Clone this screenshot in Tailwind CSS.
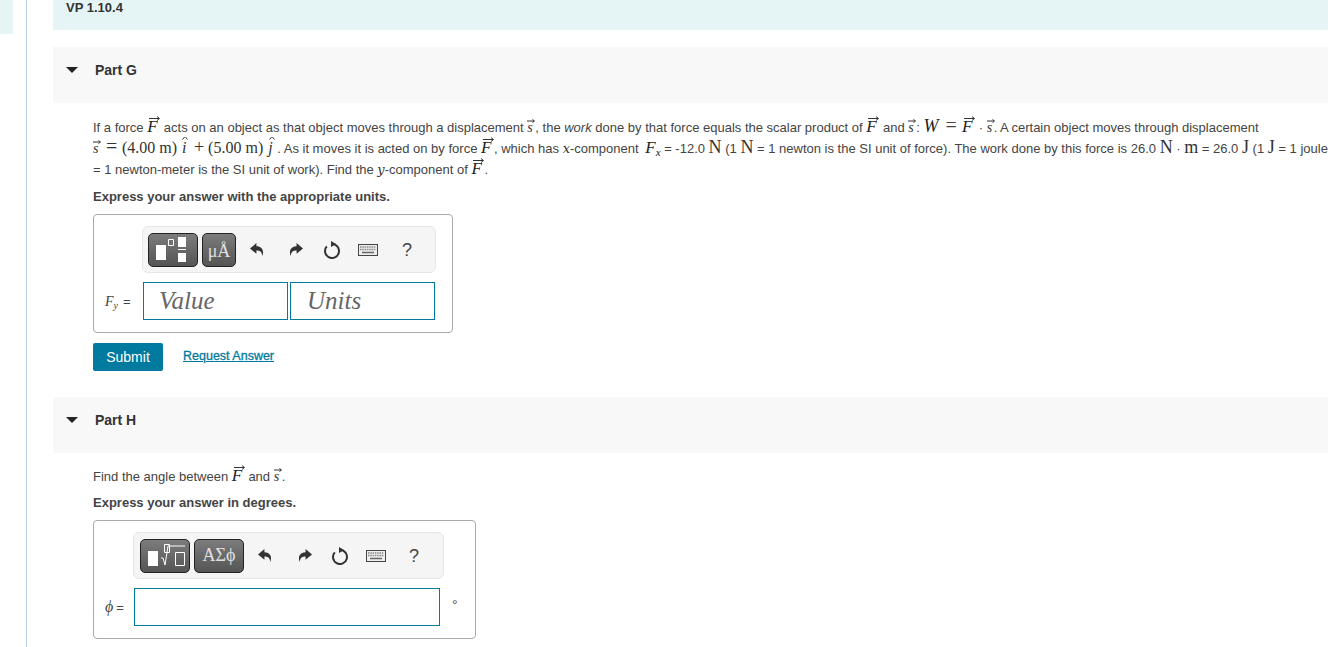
<!DOCTYPE html>
<html>
<head>
<meta charset="utf-8">
<script src="https://cdn.jsdelivr.net/npm/@tailwindcss/browser@4"></script>
</head>
<body class="bg-white">
<div class="flex w-[1342px] h-[647px] overflow-hidden font-['Liberation_Sans',sans-serif] text-[#333]">
  <div class="w-[13px] h-[34px] bg-[#e5f5f5] shrink-0"></div>
  <div class="ml-[13px] w-[1px] h-[647px] bg-[#b9d0e6] shrink-0"></div>
  <main class="ml-[26px] w-[1275px] shrink-0">
    <div class="h-[30px] bg-[#e5f5f5] pl-[13px] text-[13px] font-bold leading-[16px]">VP 1.10.4</div>

    <div class="mt-[17px] h-[56px] bg-[#f8f8f8] flex items-center">
      <svg class="ml-[13px] mb-[10px]" width="12" height="6" viewBox="0 0 12 6"><path d="M0 0h12L6 6z" fill="#222"/></svg>
      <span class="ml-[17px] mb-[10px] text-[14px] font-bold">Part G</span>
    </div>

    <div class="pl-[40px] mt-[13px] text-[13px] text-[#444]">
      <div class="h-[21px] leading-[21px] whitespace-nowrap">If a force <span class="relative inline-block w-[13px] font-['Liberation_Serif',serif] italic text-[17px] text-[#222]">F<svg class="absolute left-[2px] top-[0px]" width="11" height="5" viewBox="0 0 11 5"><path d="M0 2.500h10M8 .5l2.500 2L8 4.500" stroke="#333" fill="none"/></svg></span> acts on an object as that object moves through a displacement <span class="relative inline-block w-[8px] font-['Liberation_Serif',serif] italic text-[14px] text-[#333]">s<svg class="absolute left-0 top-[2px]" width="8" height="4" viewBox="0 0 8 4"><path d="M0 2h7M5.500 .5L7.500 2 5.500 3.500" stroke="#333" fill="none"/></svg></span>, the <i>work</i> done by that force equals the scalar product of <span class="relative inline-block w-[13px] font-['Liberation_Serif',serif] italic text-[17px] text-[#222]">F<svg class="absolute left-[2px] top-[0px]" width="11" height="5" viewBox="0 0 11 5"><path d="M0 2.500h10M8 .5l2.500 2L8 4.500" stroke="#333" fill="none"/></svg></span> and <span class="relative inline-block w-[8px] font-['Liberation_Serif',serif] italic text-[14px] text-[#333]">s<svg class="absolute left-0 top-[2px]" width="8" height="4" viewBox="0 0 8 4"><path d="M0 2h7M5.500 .5L7.500 2 5.500 3.500" stroke="#333" fill="none"/></svg></span>: <span class="inline-block w-[19px] font-['Liberation_Serif',serif] italic text-[18px] text-[#222]">W</span><span class="inline-block w-[13px] ml-[3px] font-['Liberation_Serif',serif] text-[20px] leading-[16px]">=</span> <span class="relative inline-block w-[13px] font-['Liberation_Serif',serif] italic text-[17px] text-[#222]">F<svg class="absolute left-[2px] top-[0px]" width="11" height="5" viewBox="0 0 11 5"><path d="M0 2.500h10M8 .5l2.500 2L8 4.500" stroke="#333" fill="none"/></svg></span> · <span class="relative inline-block w-[7px] font-['Liberation_Serif',serif] italic text-[14px] text-[#333]">s<svg class="absolute left-0 top-[2px]" width="8" height="4" viewBox="0 0 8 4"><path d="M0 2h7M5.500 .5L7.500 2 5.500 3.500" stroke="#333" fill="none"/></svg></span>. <span class="-ml-[1px]">A certain object moves through displacement</span></div>
      <div class="h-[21px] leading-[21px] whitespace-nowrap overflow-hidden"><span class="relative inline-block w-[8px] font-['Liberation_Serif',serif] italic text-[14px] text-[#333]">s<svg class="absolute left-0 top-[2px]" width="8" height="4" viewBox="0 0 8 4"><path d="M0 2h7M5.500 .5L7.500 2 5.500 3.500" stroke="#333" fill="none"/></svg></span><span class="font-['Liberation_Serif',serif] text-[16px] text-[#333]"><span class="inline-block ml-[5px] w-[14px] text-[20px] leading-[16px]">=</span><span class="ml-[2px]">(4.00 m)</span><span class="relative inline-block ml-[5px] w-[9px] italic">i<svg class="absolute left-0 top-[-1px]" width="6" height="4" viewBox="0 0 6 4"><path d="M.5 3.500L3 .5l2.500 3" stroke="#333" fill="none"/></svg></span><span class="inline-block ml-[3px] w-[13px] text-[18px] leading-[16px]">+</span><span class="ml-[1px]">(5.00 m)</span><span class="relative inline-block ml-[5px] w-[9px] italic">j<svg class="absolute left-[1px] top-[-1px]" width="6" height="4" viewBox="0 0 6 4"><path d="M.5 3.500L3 .5l2.500 3" stroke="#333" fill="none"/></svg></span></span>. As it moves it is acted on by force <span class="relative inline-block w-[13px] font-['Liberation_Serif',serif] italic text-[17px] text-[#222]">F<svg class="absolute left-[2px] top-[0px]" width="11" height="5" viewBox="0 0 11 5"><path d="M0 2.500h10M8 .5l2.500 2L8 4.500" stroke="#333" fill="none"/></svg></span>, which has <span class="font-['DejaVu_Serif',serif] italic text-[13px] text-[#333]">x</span>-component <span class="ml-[3px] font-['Liberation_Serif',serif] italic text-[17px] text-[#222]">F<span class="relative top-[3px] text-[11px]">x</span></span> = -12.0 <span class="font-['Liberation_Serif',serif] text-[18px] text-[#333]">N</span> (1 <span class="font-['Liberation_Serif',serif] text-[18px] text-[#333]">N</span> = 1 newton is the SI unit of force). The work done by this force is 26.0 <span class="font-['Liberation_Serif',serif] text-[18px] text-[#333]">N</span> · <span class="font-['Liberation_Serif',serif] text-[18px] text-[#333]">m</span> = 26.0 <span class="font-['Liberation_Serif',serif] text-[18px] text-[#333]">J</span> (1 <span class="font-['Liberation_Serif',serif] text-[18px] text-[#333]">J</span> = 1 joule</div>
      <div class="h-[21px] leading-[21px] whitespace-nowrap">= 1 newton-meter is the SI unit of work). Find the <span class="font-['DejaVu_Serif',serif] italic text-[13px] text-[#333]">y</span>-component of <span class="relative inline-block w-[13px] font-['Liberation_Serif',serif] italic text-[17px] text-[#222]">F<svg class="absolute left-[2px] top-[0px]" width="11" height="5" viewBox="0 0 11 5"><path d="M0 2.500h10M8 .5l2.500 2L8 4.500" stroke="#333" fill="none"/></svg></span>.</div>
      <div class="mt-[7px] h-[21px] leading-[21px] text-[13px] font-bold">Express your answer with the appropriate units.</div>

      <div class="mt-[7px] w-[360px] h-[119px] border border-[#aaa] rounded-[4px] relative">
        <div class="ml-[48px] mt-[11px] w-[294px] h-[47px] bg-[#f5f5f5] border border-[#e6e6e6] rounded-[6px] flex items-center pl-[5px]">
          <div class="w-[50px] h-[34px] rounded-[5px] border border-[#222] bg-gradient-to-b from-[#7c7c7c] to-[#555] flex items-center justify-center">
            <svg width="40" height="26" viewBox="0 0 40 26"><path d="M3 8h10v15H3z" fill="#fff"/><path d="M15.500 2.500h5v6h-5z" fill="none" stroke="#fff"/><path d="M25 0h8v10h-8zM25 16h8v9h-8z" fill="#fff"/><path d="M25 12.500h8" stroke="#fff"/></svg>
          </div>
          <div class="ml-[4px] w-[34px] h-[34px] rounded-[5px] border border-[#222] bg-gradient-to-b from-[#7c7c7c] to-[#555] flex items-center justify-center text-white/80 font-['Liberation_Serif',serif] text-[18px] pt-[3px]">μÅ</div>
          <svg class="ml-[14px]" width="15" height="15" viewBox="0 0 14 14"><path d="M6 1L0 6l6 5V8c3 0 5 1 5.500 5C13.500 8 11 4 6 4z" fill="#333"/></svg>
          <svg class="ml-[23px]" width="15" height="15" viewBox="0 0 14 14"><path d="M8 1l6 5-6 5V8c-3 0-5 1-5.500 5C.5 8 3 4 8 4z" fill="#333"/></svg>
          <svg class="ml-[20px]" width="18" height="18" viewBox="0 0 18 18"><path d="M9 3A7 7 0 1 1 3.800 5.300" fill="none" stroke="#333" stroke-width="2"/><path d="M8 0l5 3-5 3z" fill="#333"/></svg>
          <svg class="ml-[17px]" width="20" height="12" viewBox="0 0 20 12"><rect x=".5" y=".5" width="19" height="11" fill="#eee" stroke="#444"/><path d="M2 3h16M2 5.500h16" stroke="#888" stroke-width="1.500" stroke-dasharray="1.500 .8"/><path d="M4 8.500h12" stroke="#666" stroke-width="1.500"/></svg>
          <span class="ml-[24px] text-[18px] leading-[18px] text-[#444]">?</span>
        </div>
        <div class="flex items-center mt-[9px] ml-[11px]">
          <span class="w-[38px] font-['Liberation_Serif',serif] text-[14px]"><i>F<span class="relative top-[3px] text-[10px]">y</span></i><span class="ml-[5px] font-['Liberation_Sans',sans-serif] text-[13px] text-[#444]">=</span></span>
          <div class="w-[145px] h-[38px] border border-[#007a9a] pl-[15px] font-['Liberation_Serif',serif] italic text-[25px] leading-[36px] text-[#666]">Value</div>
          <div class="ml-[2px] w-[145px] h-[38px] border border-[#007a9a] pl-[16px] font-['Liberation_Serif',serif] italic text-[25px] leading-[36px] text-[#666]">Units</div>
        </div>
      </div>

      <div class="mt-[10px] flex items-center">
        <div class="w-[70px] h-[28px] bg-[#007a9e] rounded-[2px] text-white text-[14px] leading-[28px] text-center">Submit</div>
        <a class="ml-[20px] mb-[2px] text-[12.5px] underline text-[#007a9e] [-webkit-text-stroke:0.3px]">Request Answer</a>
      </div>
    </div>

    <div class="mt-[26px] h-[56px] bg-[#f8f8f8] flex items-center">
      <svg class="ml-[13px] mb-[10px]" width="12" height="6" viewBox="0 0 12 6"><path d="M0 0h12L6 6z" fill="#222"/></svg>
      <span class="ml-[17px] mb-[10px] text-[14px] font-bold">Part H</span>
    </div>

    <div class="pl-[40px] mt-[12px] text-[13px] text-[#444]">
      <div class="h-[21px] leading-[21px] whitespace-nowrap">Find the angle between <span class="relative inline-block w-[13px] font-['Liberation_Serif',serif] italic text-[17px] text-[#222]">F<svg class="absolute left-[2px] top-[0px]" width="11" height="5" viewBox="0 0 11 5"><path d="M0 2.500h10M8 .5l2.500 2L8 4.500" stroke="#333" fill="none"/></svg></span> and <span class="relative inline-block w-[8px] font-['Liberation_Serif',serif] italic text-[14px] text-[#333]">s<svg class="absolute left-0 top-[2px]" width="8" height="4" viewBox="0 0 8 4"><path d="M0 2h7M5.500 .5L7.500 2 5.500 3.500" stroke="#333" fill="none"/></svg></span>.</div>
      <div class="mt-[6px] h-[21px] leading-[21px] text-[13px] font-bold">Express your answer in degrees.</div>

      <div class="mt-[7px] w-[383px] h-[119px] border border-[#aaa] rounded-[4px]">
        <div class="ml-[39px] mt-[11px] w-[311px] h-[47px] bg-[#f5f5f5] border border-[#e6e6e6] rounded-[6px] flex items-center pl-[6px]">
          <div class="w-[50px] h-[34px] rounded-[5px] border border-[#222] bg-gradient-to-b from-[#7c7c7c] to-[#555] flex items-center justify-center">
            <svg width="40" height="26" viewBox="0 0 40 26"><path d="M3 8h10v15H3z" fill="#fff"/><path d="M16 15l2 0 2 7 3-19h17" fill="none" stroke="#fff"/><path d="M19.500 1.500h5v8h-5zM30.500 9.500h9v13h-9z" fill="none" stroke="#fff"/></svg>
          </div>
          <div class="ml-[4px] w-[50px] h-[34px] rounded-[5px] border border-[#222] bg-gradient-to-b from-[#7c7c7c] to-[#555] flex items-center justify-center text-white/80 font-['Liberation_Serif',serif] text-[18px]">ΑΣϕ</div>
          <svg class="ml-[14px]" width="15" height="15" viewBox="0 0 14 14"><path d="M6 1L0 6l6 5V8c3 0 5 1 5.500 5C13.500 8 11 4 6 4z" fill="#333"/></svg>
          <svg class="ml-[24px]" width="15" height="15" viewBox="0 0 14 14"><path d="M8 1l6 5-6 5V8c-3 0-5 1-5.500 5C.5 8 3 4 8 4z" fill="#333"/></svg>
          <svg class="ml-[19px]" width="18" height="18" viewBox="0 0 18 18"><path d="M9 3A7 7 0 1 1 3.800 5.300" fill="none" stroke="#333" stroke-width="2"/><path d="M8 0l5 3-5 3z" fill="#333"/></svg>
          <svg class="ml-[17px]" width="20" height="12" viewBox="0 0 20 12"><rect x=".5" y=".5" width="19" height="11" fill="#eee" stroke="#444"/><path d="M2 3h16M2 5.500h16" stroke="#888" stroke-width="1.500" stroke-dasharray="1.500 .8"/><path d="M4 8.500h12" stroke="#666" stroke-width="1.500"/></svg>
          <span class="ml-[23px] text-[18px] leading-[18px] text-[#444]">?</span>
        </div>
        <div class="flex items-center mt-[9px] ml-[11px]">
          <span class="w-[29px] font-['Liberation_Serif',serif] text-[16px]"><i>ϕ</i><span class="ml-[3px] font-['Liberation_Sans',sans-serif] text-[13px] text-[#444]">=</span></span>
          <div class="w-[306px] h-[38px] border border-[#007a9a]"></div>
          <span class="ml-[12px] mb-[4px] text-[14px] text-[#555]">°</span>
        </div>
      </div>
    </div>
  </main>
</div>
</body>
</html>
